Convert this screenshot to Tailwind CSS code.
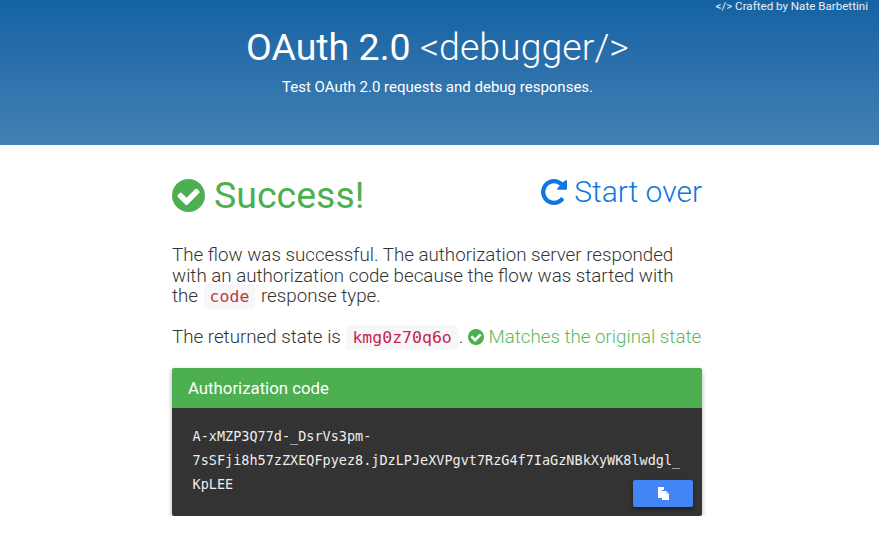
<!DOCTYPE html>
<html><head><meta charset="utf-8"><script src="https://cdn.jsdelivr.net/npm/@tailwindcss/browser@4"></script></head>
<body class="bg-white font-['Roboto',sans-serif] font-light text-[#333] overflow-hidden">
<header class="relative h-[145px] bg-gradient-to-b from-[#1362a3] to-[#4280b4] text-white text-center">
  <div class="absolute -top-[1px] right-[11px] text-[11.6px] leading-[14px] font-normal text-white/90">&lt;/&gt; Crafted by Nate Barbettini</div>
  <div class="w-[382px] ml-[246px] pt-[23px] text-left">
    <h1 class="text-[37.5px] leading-[48px] font-normal whitespace-nowrap">OAuth 2.0 <span class="font-light">&lt;debugger/&gt;</span></h1>
    <p class="mt-[4px] ml-[36px] text-[15px] leading-[24px] font-normal">Test OAuth 2.0 requests and debug responses.</p>
  </div>
</header>
<main class="w-[530px] ml-[172px]">
  <div class="flex justify-between items-start h-[92px] pt-[28px]">
    <h2 class="flex items-center text-[#4caf50] text-[37.5px] leading-[44px] font-normal"><svg class="w-[33px] h-[33px] mr-[9px]" viewBox="128 128 1536 1536" fill="currentColor"><path d="M1412 734q0-28-18-46l-91-90q-19-19-45-19t-45 19l-408 407-226-226q-19-19-45-19t-45 19l-91 90q-18 18-18 46 0 27 18 45l362 362q19 19 45 19 27 0 46-19l543-543q18-18 18-45zm252 162q0 209-103 385.500t-279.500 279.500-385.500 103-385.500-103-279.500-279.500-103-385.500 103-385.500 279.500-279.500 385.500-103 385.500 103 279.500 279.500 103 385.500z"/></svg>Success!</h2>
    <a class="flex items-center text-[#0e76e0] text-[30px] leading-[38px]"><svg class="w-[26px] h-[26px] mr-[7px]" viewBox="128 128 1536 1536" fill="currentColor"><path d="M1664 256v448q0 26-19 45t-45 19h-448q-42 0-59-40-17-39 14-69l138-138q-148-137-349-137-104 0-198.500 40.500t-163.500 109.500-109.500 163.500-40.500 198.500 40.500 198.500 109.500 163.500 163.500 109.500 198.500 40.500q119 0 225-52t179-147q7-10 23-12 15 0 25 9l137 138q9 8 9.500 20.500t-7.500 22.500q-109 132-264 204.500t-327 72.500q-156 0-298-61t-245-164-164-245-61-298 61-298 164-245 245-164 298-61q147 0 284.500 55.500t244.500 156.500l130-129q29-31 70-14 39 17 39 59z"/></svg>Start over</a>
  </div>
  <p class="mt-[8px] text-[18.75px] leading-[20.5px]">The flow was successful. The authorization server responded with an authorization code because the flow was started with the <code class="font-['DejaVu_Sans_Mono',monospace] font-normal text-[16.5px] text-[#c0393f] bg-[#f7f7f9] rounded-[4px] px-[6px] py-[3px] mx-[1px]">code</code> response type.</p>
  <p class="mt-[18px] text-[18.75px] leading-[22px] whitespace-nowrap">The returned state is <code class="font-['DejaVu_Sans_Mono',monospace] font-normal text-[16.5px] text-[#c7254e] bg-[#f7f7f9] rounded-[4px] px-[6px] py-[3px] mx-[1px]">kmg0z70q6o</code>. <svg class="inline w-[16px] h-[16px] align-[-2px] text-[#4caf50]" viewBox="128 128 1536 1536" fill="currentColor"><path d="M1412 734q0-28-18-46l-91-90q-19-19-45-19t-45 19l-408 407-226-226q-19-19-45-19t-45 19l-91 90q-18 18-18 46 0 27 18 45l362 362q19 19 45 19 27 0 46-19l543-543q18-18 18-45zm252 162q0 209-103 385.500t-279.500 279.500-385.500 103-385.500-103-279.500-279.500-103-385.500 103-385.500 279.500-279.500 385.500-103 385.500 103 279.500 279.500 103 385.500z"/></svg> <span class="text-[#5cb85c]">Matches the original state</span></p>
  <section class="mt-[19px] rounded-[2px] shadow-[0_2px_5px_0_rgba(0,0,0,0.3)]">
    <div class="h-[40px] bg-[#4caf50] text-white text-[16.8px] leading-[40px] font-normal px-[16px] rounded-t-[2px]">Authorization code</div>
    <div class="relative h-[108px] bg-[#333] rounded-b-[2px] pl-[20.5px] pt-[16px] font-['DejaVu_Sans_Mono',monospace] font-normal text-[13.5px] leading-[24px] text-[#eee] whitespace-nowrap">
      <div>A-xMZP3Q77d-_DsrVs3pm-</div>
      <div>7sSFji8h57zZXEQFpyez8.jDzLPJeXVPgvt7RzG4f7IaGzNBkXyWK8lwdgl_</div>
      <div>KpLEE</div>
      <button class="absolute right-[9px] bottom-[9px] w-[60px] h-[27px] flex items-center justify-center rounded-[2px] bg-[#4285f4] shadow-[0_2px_4px_rgba(0,0,0,0.4)]"><svg class="w-[13px] h-[13px]" viewBox="0 0 13 13"><path d="M1 0h6v3H5v8H1z" fill="#fff"/><path d="M5 4h4l3 3v6H5z" fill="#fff"/><path d="M9 4v3h3" fill="#cfe0ff"/></svg></button>
    </div>
  </section>
</main>
</body></html>
